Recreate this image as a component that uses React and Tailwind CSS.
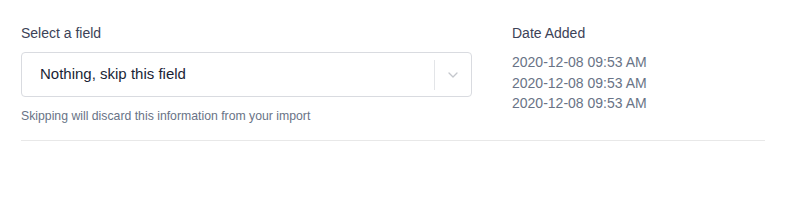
import React from 'react';

const dates = ['2020-12-08 09:53 AM', '2020-12-08 09:53 AM', '2020-12-08 09:53 AM'];

export default function App() {
    return (
        <div className="w-[795px] h-[202px] bg-white font-['Liberation_Sans',Arial,sans-serif]">
            <div className="pt-[25px] pl-[21px] w-[765px]">
                <div className="flex gap-[40px] pb-[16px] border-b border-[#e8e8e8]">
                    {/* Field select */}
                    <div className="w-[451px]">
                        <label className="block text-[14px] leading-[16px] text-[#3c4257]">Select a field</label>
                        <div className="mt-[11px] h-[45px] flex items-center rounded-[4px] border border-[#d9dbe0] bg-white">
                            <span className="flex-1 pl-[18px] text-[15px] text-[#1a1f36]">Nothing, skip this field</span>
                            <span className="w-px h-[30px] bg-[#e3e5e8]"></span>
                            <span className="w-[36px] flex items-center justify-center">
                                <svg width="10" height="6" viewBox="0 0 10 6" fill="none">
                                    <path d="M1 1l4 4 4-4" stroke="#c4c7cc" strokeWidth="1.3" strokeLinecap="round" strokeLinejoin="round" />
                                </svg>
                            </span>
                        </div>
                        <p className="mt-[12px] text-[12.25px] leading-[15px] text-[#697386]">Skipping will discard this information from your import</p>
                    </div>

                    {/* Dates */}
                    <div className="flex-1">
                        <p className="text-[14px] leading-[16px] text-[#3c4257]">Date Added</p>
                        <div className="mt-[11px]">
                            {dates.map((d, i) => (
                                <p key={i} className="text-[14px] leading-[20.5px] text-[#697386]">{d}</p>
                            ))}
                        </div>
                    </div>
                </div>
            </div>
        </div>
    );
}
